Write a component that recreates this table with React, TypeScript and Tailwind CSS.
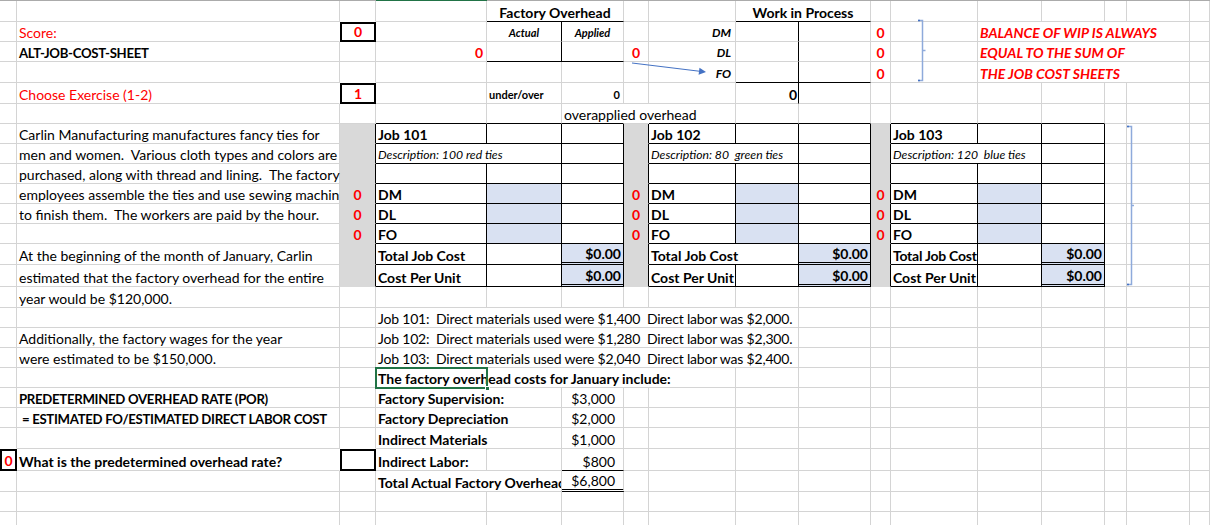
import React from "react";

type Cell = {
  s?: number;
  t?: string;
  f?: string;
  a?: "l" | "c" | "r";
  r?: string;
  b?: string;
  bg?: string;
  box?: boolean;
  ov?: boolean;
  p?: string;
};

const RB: Record<string, string> = {
  g: "border-r border-r-[#d4d4d4]",
  k: "border-r border-r-black",
  n: "border-r border-r-transparent",
};
const BB: Record<string, string> = {
  g: "border-b border-b-[#d4d4d4]",
  k: "border-b border-b-black",
  n: "border-b border-b-transparent",
  d: "border-b-[3px] border-b-black border-double",
};
const SPAN = ["", "col-span-1", "col-span-2", "col-span-3", "col-span-4", "col-span-5", "col-span-6"];
const AL: Record<string, string> = { l: "justify-start", c: "justify-center", r: "justify-end" };

const RED = "text-[#ff0000] font-bold";
const BOLD = "font-bold";
const TIGHT = "font-bold tracking-[-0.25px]";
const CAPS = "font-bold text-[13.2px] tracking-[-0.3px]";
const SMI = "text-[11px] italic font-bold";
const DESC = "text-[12.2px] italic";
const WIPL = "text-[12px] italic font-bold";
const NOTE = "text-[#ff0000] italic font-bold";
const JOBL = "tracking-[-0.2px]";
const BLUE = "bg-[#d9e1f2]";
const GRAY = "bg-[#d9d9d9]";

const E: Cell = {};
const K: Cell = { r: "k", b: "k" };
const GR = (t?: string): Cell => ({ bg: GRAY, r: "k", b: "n", t, f: RED, a: "c" });
const empties = (n: number): Cell[] => Array.from({ length: n }, () => ({}));

const jobLine = (label: string): Cell[] => [
  { ...K, t: label, f: BOLD },
  { ...K, bg: BLUE },
  K,
];

const money: Cell = { ...K, b: "d", bg: BLUE, t: "$0.00", f: BOLD, a: "r", p: "pr-[2px]" };

const rows: Cell[][] = [
  // 1
  [E, E, { b: "n" }, E, { s: 2, t: "Factory Overhead", f: BOLD, a: "c", b: "k" }, E, E, { s: 2, t: "Work in Process", f: BOLD, a: "c", b: "k" }, ...empties(7)],
  // 2
  [
    E,
    { t: "Score:", f: "text-[#ff0000]", r: "n" },
    { box: true, t: "0", f: RED, a: "c" },
    E,
    { t: "Actual", f: SMI, a: "c", r: "k" },
    { t: "Applied", f: SMI, a: "c" },
    E,
    { t: "DM", f: WIPL, a: "r", p: "pr-[4px]" },
    { r: "k" },
    E,
    { t: "0", f: RED, a: "c" },
    E,
    { s: 4, t: "BALANCE OF WIP IS ALWAYS", f: NOTE },
    E,
  ],
  // 3
  [
    E,
    { t: "ALT-JOB-COST-SHEET", f: CAPS },
    E,
    { t: "0", f: RED, a: "r", p: "pr-[3px]" },
    { r: "k", b: "k" },
    { b: "k" },
    { t: "0", f: RED, a: "c" },
    { t: "DL", f: WIPL, a: "r", p: "pr-[4px]" },
    { r: "k" },
    E,
    { t: "0", f: RED, a: "c" },
    E,
    { s: 4, t: "EQUAL TO THE SUM OF", f: NOTE },
    E,
  ],
  // 4
  [
    E,
    E,
    { b: "n" },
    E,
    E,
    E,
    E,
    { t: "FO", f: WIPL, a: "r", p: "pr-[4px]" },
    { r: "k", b: "k" },
    { b: "k" },
    { t: "0", f: RED, a: "c" },
    E,
    { s: 4, t: "THE JOB COST SHEETS", f: NOTE },
    E,
  ],
  // 5
  [
    E,
    { t: "Choose Exercise (1-2)", f: "text-[#ff0000]", r: "n" },
    { box: true, t: "1", f: RED, a: "c" },
    E,
    { t: "under/over", f: "text-[11px] font-bold" },
    { t: "0", f: "text-[11px] font-bold", a: "r", p: "pr-[3px]" },
    E,
    E,
    { t: "0", f: BOLD, a: "r", p: "pr-[1px]", r: "k" },
    ...empties(8),
  ],
  // 6
  [
    E,
    E,
    E,
    { b: "k" },
    { b: "k" },
    { t: "overapplied overhead", ov: true, r: "n", b: "k" },
    { r: "n" },
    { b: "k" },
    { b: "k" },
    { b: "k" },
    E,
    { b: "k" },
    { b: "k" },
    { b: "k" },
    E,
    E,
    E,
  ],
  // 7
  [
    E,
    { t: "Carlin Manufacturing manufactures fancy ties for" },
    GR(),
    { ...K, t: "Job 101", f: BOLD },
    K,
    K,
    GR(),
    { ...K, t: "Job 102", f: BOLD },
    K,
    K,
    GR(),
    { ...K, t: "Job 103", f: BOLD },
    K,
    K,
    E,
    E,
    E,
  ],
  // 8
  [
    E,
    { t: "men and women.  Various cloth types and colors are", ov: true },
    GR(),
    { ...K, s: 2, t: "Description: 100 red ties", f: DESC },
    K,
    GR(),
    { ...K, s: 2, t: "Description: 80  green ties", f: DESC },
    K,
    GR(),
    { ...K, s: 2, t: "Description: 120  blue ties", f: DESC },
    K,
    E,
    E,
    E,
  ],
  // 9
  [E, { t: "purchased, along with thread and lining.  The factory", ov: true }, GR(), K, K, K, GR(), K, K, K, GR(), K, K, K, E, E, E],
  // 10
  [E, { t: "employees assemble the ties and use sewing machines" }, GR("0"), ...jobLine("DM"), GR("0"), ...jobLine("DM"), GR("0"), ...jobLine("DM"), E, E, E],
  // 11
  [E, { t: "to finish them.  The workers are paid by the hour." }, GR("0"), ...jobLine("DL"), GR("0"), ...jobLine("DL"), GR("0"), ...jobLine("DL"), E, E, E],
  // 12
  [E, E, GR("0"), ...jobLine("FO"), GR("0"), ...jobLine("FO"), GR("0"), ...jobLine("FO"), E, E, E],
  // 13
  [
    E,
    { t: "At the beginning of the month of January, Carlin" },
    GR(),
    { ...K, t: "Total Job Cost", f: BOLD },
    K,
    money,
    GR(),
    { ...K, s: 2, t: "Total Job Cost", f: BOLD },
    money,
    GR(),
    { ...K, t: "Total Job Cost", f: TIGHT, p: "pl-[2px] pr-0" },
    K,
    money,
    E,
    E,
    E,
  ],
  // 14
  [
    E,
    { t: "estimated that the factory overhead for the entire" },
    GR(),
    { ...K, t: "Cost Per Unit", f: BOLD },
    K,
    money,
    GR(),
    { ...K, t: "Cost Per Unit", f: BOLD },
    K,
    money,
    GR(),
    { ...K, t: "Cost Per Unit", f: BOLD },
    K,
    money,
    E,
    E,
    E,
  ],
  // 15
  [E, { t: "year would be $120,000." }, ...empties(15)],
  // 16
  [E, E, E, { s: 6, t: "Job 101:  Direct materials used were $1,400  Direct labor was $2,000.", f: JOBL }, ...empties(8)],
  // 17
  [E, { t: "Additionally, the factory wages for the year" }, E, { s: 6, t: "Job 102:  Direct materials used were $1,280  Direct labor was $2,300.", f: JOBL }, ...empties(8)],
  // 18
  [E, { t: "were estimated to be $150,000." }, E, { s: 6, t: "Job 103:  Direct materials used were $2,040  Direct labor was $2,400.", f: JOBL }, ...empties(8)],
  // 19
  [E, E, E, { s: 5, t: "The factory overhead costs for January include:", f: BOLD }, ...empties(9)],
  // 20
  [E, { t: "PREDETERMINED OVERHEAD RATE (POR)", f: CAPS }, E, { s: 2, t: "Factory Supervision:", f: BOLD }, { t: "$3,000", a: "r", p: "pr-[8px]" }, ...empties(11)],
  // 21
  [E, { t: " = ESTIMATED FO/ESTIMATED DIRECT LABOR COST", f: CAPS }, E, { s: 2, t: "Factory Depreciation", f: BOLD }, { t: "$2,000", a: "r", p: "pr-[8px]" }, ...empties(11)],
  // 22
  [{ b: "n" }, E, { b: "n" }, { s: 2, t: "Indirect Materials", f: BOLD }, { t: "$1,000", a: "r", p: "pr-[8px]" }, ...empties(11)],
  // 23
  [
    { box: true, t: "0", f: RED, a: "c", p: "px-0" },
    { t: "What is the predetermined overhead rate?", f: BOLD, r: "n" },
    { box: true },
    { t: "Indirect Labor:", f: BOLD },
    E,
    { t: "$800", a: "r", p: "pr-[8px]", b: "k" },
    ...empties(11),
  ],
  // 24
  [E, E, E, { s: 2, t: "Total Actual Factory Overhead", f: BOLD }, { t: "$6,800", a: "r", p: "pr-[8px]", b: "d" }, ...empties(11)],
  // 25
  empties(17),
  // 26
  empties(17),
];

function CellView({ c }: { c: Cell }) {
  const span = SPAN[c.s ?? 1];
  const borders = c.box ? "border-2 border-black" : `${RB[c.r ?? "g"]} ${BB[c.b ?? "g"]}`;
  const align = AL[c.a ?? "l"];
  const over = c.ov ? "overflow-visible relative z-10" : "overflow-hidden";
  const pad = c.p ?? "px-[2px]";
  return (
    <div
      className={`${span} ${borders} ${c.bg ?? ""} flex items-end ${align} ${over} whitespace-pre ${pad} leading-[16px] min-w-0 ${c.f ?? ""}`}
    >
      {c.t ? <span>{c.t}</span> : null}
    </div>
  );
}

export default function App() {
  return (
    <div className="relative w-[1210px] h-[525px] overflow-hidden bg-white text-black text-[14px] [font-family:Lato,sans-serif]">
      <div className="flex h-px">
        <div className="w-[376px] bg-[#ababab]" />
        <div className="w-[111px] bg-[#217346]" />
        <div className="flex-1 bg-[#ababab]" />
      </div>
      <div className="grid grid-cols-[17px_323px_36px_111px_75px_62px_25px_87px_63px_72px_20px_87px_64px_63px_22px_63px_20px] grid-rows-[21px_20px_20px_21px_21px_20px_20px_20px_20px_20px_20px_20px_21px_22px_21px_20px_20px_20px_20px_20px_20px_21px_22px_21px_20px_20px]">
        {rows.flatMap((row, ri) => row.map((c, ci) => <CellView key={`${ri}-${ci}`} c={c} />))}
      </div>

      {/* selection border on D19 */}
      <div className="absolute left-[375px] top-[367px] w-[113px] h-[22px] border-2 border-[#217346] pointer-events-none" />
      <div className="absolute left-[485px] top-[386px] w-[5px] h-[5px] bg-[#217346] border border-white pointer-events-none" />

      <svg className="absolute left-0 top-0 pointer-events-none" width="1210" height="525" viewBox="0 0 1210 525">
        {/* arrow */}
        <line x1="632" y1="63" x2="700" y2="71.3" stroke="#4472c4" strokeWidth="1" />
        <polygon points="706,72 698.6,74.8 699.5,67.8" fill="#4472c4" />
        {/* bracket 1 */}
        <path d="M918 20.5 H922.5 V80.5 H918 M922.5 50.5 H925.5" fill="none" stroke="#8eaadb" strokeWidth="1.5" />
        <path d="M918 20.5 H920 M918 80.5 H920" fill="none" stroke="#4472c4" strokeWidth="1.5" />
        {/* bracket 2 */}
        <path d="M1127 126.5 H1131.5 V284.5 H1127 M1131.5 205.5 H1134" fill="none" stroke="#8eaadb" strokeWidth="1.5" />
        <path d="M1127 126.5 H1129 M1127 284.5 H1129" fill="none" stroke="#4472c4" strokeWidth="1.5" />
      </svg>
    </div>
  );
}
